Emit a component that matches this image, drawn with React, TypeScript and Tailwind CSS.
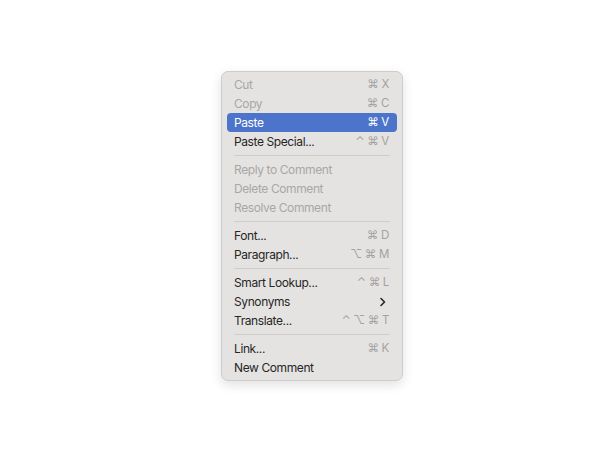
import { Fragment } from 'react';

type Item = {
  label: string;
  keys?: string;
  disabled?: boolean;
  active?: boolean;
  submenu?: boolean;
};

const groups: Item[][] = [
  [
    { label: 'Cut', keys: '⌘ X', disabled: true },
    { label: 'Copy', keys: '⌘ C', disabled: true },
    { label: 'Paste', keys: '⌘ V', active: true },
    { label: 'Paste Special...', keys: '⌃ ⌘ V' },
  ],
  [
    { label: 'Reply to Comment', disabled: true },
    { label: 'Delete Comment', disabled: true },
    { label: 'Resolve Comment', disabled: true },
  ],
  [
    { label: 'Font...', keys: '⌘ D' },
    { label: 'Paragraph...', keys: '⌥ ⌘ M' },
  ],
  [
    { label: 'Smart Lookup...', keys: '⌃ ⌘ L' },
    { label: 'Synonyms', submenu: true },
    { label: 'Translate...', keys: '⌃ ⌥ ⌘ T' },
  ],
  [
    { label: 'Link...', keys: '⌘ K' },
    { label: 'New Comment' },
  ],
];

const MenuRow = ({ item }: { item: Item }) => {
  const labelColor = item.active
    ? 'text-white'
    : item.disabled
      ? 'text-[#a8a7a6]'
      : 'text-[#262626]';
  const keyColor = item.active ? 'text-white' : 'text-[#a3a2a1]';
  return (
    <div
      className={`flex h-[19px] items-center justify-between rounded-[4px] pl-[7px] pr-[8px] pt-[1px] ${
        item.active ? 'bg-[#4c74cb]' : ''
      }`}
    >
      <span className={`text-[12px] leading-none tracking-[-0.4px] ${labelColor}`}>{item.label}</span>
      {item.keys && (
        <span className={`whitespace-pre text-[11.5px] leading-none tracking-[-0.3px] ${keyColor}`}>{item.keys}</span>
      )}
      {item.submenu && (
        <svg width="8" height="10" viewBox="0 0 8 10" className="mr-[2px]">
          <path d="M2 1.5 L5.5 5 L2 8.5" fill="none" stroke="#262626" strokeWidth="1.6" strokeLinecap="round" strokeLinejoin="round" />
        </svg>
      )}
    </div>
  );
};

export default function App() {
  return (
    <div className="flex h-[452px] w-[600px] items-start justify-center bg-white pt-[71px] font-['Inter','DejaVu_Sans',sans-serif]">
      <div className="ml-[24px] w-[182px] rounded-[7px] border border-[#cfcdcb] bg-[#e5e3e2] px-[5px] pb-[3px] pt-[3px] shadow-[0_4px_12px_rgba(0,0,0,0.12)]">
        {groups.map((group, gi) => (
          <Fragment key={gi}>
            {gi > 0 && (
              <div className="flex h-[9px] items-center px-[7px]">
                <div className="h-px w-full bg-[#cfcdcc]" />
              </div>
            )}
            {group.map((item) => (
              <MenuRow key={item.label} item={item} />
            ))}
          </Fragment>
        ))}
      </div>
    </div>
  );
}
